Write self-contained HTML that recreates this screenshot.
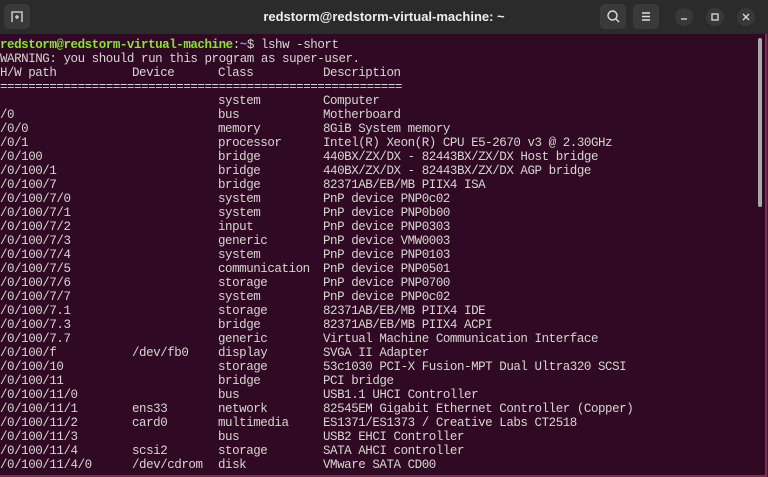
<!DOCTYPE html>
<html><head><meta charset="utf-8"><style>
html,body{margin:0;padding:0;width:768px;height:477px;overflow:hidden;background:#2c2c2c;}
.hdr{position:absolute;left:0;top:0;width:766px;height:34px;background:#2b2b2b;}
.title{position:absolute;left:0;width:768px;top:9px;text-align:center;color:#eee;font:bold 13px "Liberation Sans",sans-serif;}
.btn{position:absolute;top:4px;width:26px;height:25px;background:#3a3a3a;border-radius:5px;}
.cb{position:absolute;top:8px;width:18px;height:18px;background:#383838;border-radius:50%;}
.term{position:absolute;left:0;top:34px;width:765px;height:441px;background:#300a24;border-right:2px solid #7a3050;border-bottom:2px solid #7a3050;}
.sb{position:absolute;left:758px;top:38px;width:4px;height:169px;background:#a8a8a8;border-radius:2px;}
.l{position:absolute;left:0;height:14px;font:12.5px/14px "Liberation Mono",monospace;letter-spacing:-0.45px;color:#d6d6d0;white-space:pre;}
.c{position:absolute;white-space:pre;}
</style></head><body>
<div class="hdr"></div>
<div class="btn" style="left:4px"><svg width="26" height="25"><path d="M8 18V8h10v10M11 13h4M13 11v4" stroke="#ddd" stroke-width="1.3" fill="none"/></svg></div>
<div class="title">redstorm@redstorm-virtual-machine: ~</div>
<div class="btn" style="left:600px"><svg width="26" height="25"><circle cx="12.5" cy="11.5" r="4.5" stroke="#ddd" stroke-width="1.4" fill="none"/><path d="M16 15l3 3" stroke="#ddd" stroke-width="1.4"/></svg></div>
<div class="btn" style="left:633px"><svg width="26" height="25"><path d="M9 9h8M9 12.5h8M9 16h8" stroke="#ddd" stroke-width="1.4"/></svg></div>
<div class="cb" style="left:675px"><svg width="18" height="18"><path d="M6 11h6" stroke="#ddd" stroke-width="1.3"/></svg></div>
<div class="cb" style="left:706px"><svg width="18" height="18"><rect x="6" y="6" width="6" height="6" stroke="#ddd" stroke-width="1.3" fill="none"/></svg></div>
<div class="cb" style="left:737px"><svg width="18" height="18"><path d="M6 6l6 6M12 6l-6 6" stroke="#ddd" stroke-width="1.3"/></svg></div>
<div class="term"></div>
<div class="sb"></div>
<div class="l" style="top:38px"><b style="color:#8ae234">redstorm@redstorm-virtual-machine</b>:<b style="color:#729fcf">~</b>$ lshw -short</div>
<div class="l" style="top:52px">WARNING: you should run this program as super-user.</div>
<div class="l" style="top:66px"><span class="c" style="left:0">H/W path</span><span class="c" style="left:132px">Device</span><span class="c" style="left:218px">Class</span><span class="c" style="left:323px">Description</span></div>
<div class="l" style="top:80px">=========================================================</div>
<div class="l" style="top:94px;width:768px"><span class="c" style="left:218px">system</span><span class="c" style="left:323px">Computer</span></div>
<div class="l" style="top:108px;width:768px"><span class="c" style="left:0">/0</span><span class="c" style="left:218px">bus</span><span class="c" style="left:323px">Motherboard</span></div>
<div class="l" style="top:122px;width:768px"><span class="c" style="left:0">/0/0</span><span class="c" style="left:218px">memory</span><span class="c" style="left:323px">8GiB System memory</span></div>
<div class="l" style="top:136px;width:768px"><span class="c" style="left:0">/0/1</span><span class="c" style="left:218px">processor</span><span class="c" style="left:323px">Intel(R) Xeon(R) CPU E5-2670 v3 @ 2.30GHz</span></div>
<div class="l" style="top:150px;width:768px"><span class="c" style="left:0">/0/100</span><span class="c" style="left:218px">bridge</span><span class="c" style="left:323px">440BX/ZX/DX - 82443BX/ZX/DX Host bridge</span></div>
<div class="l" style="top:164px;width:768px"><span class="c" style="left:0">/0/100/1</span><span class="c" style="left:218px">bridge</span><span class="c" style="left:323px">440BX/ZX/DX - 82443BX/ZX/DX AGP bridge</span></div>
<div class="l" style="top:178px;width:768px"><span class="c" style="left:0">/0/100/7</span><span class="c" style="left:218px">bridge</span><span class="c" style="left:323px">82371AB/EB/MB PIIX4 ISA</span></div>
<div class="l" style="top:192px;width:768px"><span class="c" style="left:0">/0/100/7/0</span><span class="c" style="left:218px">system</span><span class="c" style="left:323px">PnP device PNP0c02</span></div>
<div class="l" style="top:206px;width:768px"><span class="c" style="left:0">/0/100/7/1</span><span class="c" style="left:218px">system</span><span class="c" style="left:323px">PnP device PNP0b00</span></div>
<div class="l" style="top:220px;width:768px"><span class="c" style="left:0">/0/100/7/2</span><span class="c" style="left:218px">input</span><span class="c" style="left:323px">PnP device PNP0303</span></div>
<div class="l" style="top:234px;width:768px"><span class="c" style="left:0">/0/100/7/3</span><span class="c" style="left:218px">generic</span><span class="c" style="left:323px">PnP device VMW0003</span></div>
<div class="l" style="top:248px;width:768px"><span class="c" style="left:0">/0/100/7/4</span><span class="c" style="left:218px">system</span><span class="c" style="left:323px">PnP device PNP0103</span></div>
<div class="l" style="top:262px;width:768px"><span class="c" style="left:0">/0/100/7/5</span><span class="c" style="left:218px">communication</span><span class="c" style="left:323px">PnP device PNP0501</span></div>
<div class="l" style="top:276px;width:768px"><span class="c" style="left:0">/0/100/7/6</span><span class="c" style="left:218px">storage</span><span class="c" style="left:323px">PnP device PNP0700</span></div>
<div class="l" style="top:290px;width:768px"><span class="c" style="left:0">/0/100/7/7</span><span class="c" style="left:218px">system</span><span class="c" style="left:323px">PnP device PNP0c02</span></div>
<div class="l" style="top:304px;width:768px"><span class="c" style="left:0">/0/100/7.1</span><span class="c" style="left:218px">storage</span><span class="c" style="left:323px">82371AB/EB/MB PIIX4 IDE</span></div>
<div class="l" style="top:318px;width:768px"><span class="c" style="left:0">/0/100/7.3</span><span class="c" style="left:218px">bridge</span><span class="c" style="left:323px">82371AB/EB/MB PIIX4 ACPI</span></div>
<div class="l" style="top:332px;width:768px"><span class="c" style="left:0">/0/100/7.7</span><span class="c" style="left:218px">generic</span><span class="c" style="left:323px">Virtual Machine Communication Interface</span></div>
<div class="l" style="top:346px;width:768px"><span class="c" style="left:0">/0/100/f</span><span class="c" style="left:132px">/dev/fb0</span><span class="c" style="left:218px">display</span><span class="c" style="left:323px">SVGA II Adapter</span></div>
<div class="l" style="top:360px;width:768px"><span class="c" style="left:0">/0/100/10</span><span class="c" style="left:218px">storage</span><span class="c" style="left:323px">53c1030 PCI-X Fusion-MPT Dual Ultra320 SCSI</span></div>
<div class="l" style="top:374px;width:768px"><span class="c" style="left:0">/0/100/11</span><span class="c" style="left:218px">bridge</span><span class="c" style="left:323px">PCI bridge</span></div>
<div class="l" style="top:388px;width:768px"><span class="c" style="left:0">/0/100/11/0</span><span class="c" style="left:218px">bus</span><span class="c" style="left:323px">USB1.1 UHCI Controller</span></div>
<div class="l" style="top:402px;width:768px"><span class="c" style="left:0">/0/100/11/1</span><span class="c" style="left:132px">ens33</span><span class="c" style="left:218px">network</span><span class="c" style="left:323px">82545EM Gigabit Ethernet Controller (Copper)</span></div>
<div class="l" style="top:416px;width:768px"><span class="c" style="left:0">/0/100/11/2</span><span class="c" style="left:132px">card0</span><span class="c" style="left:218px">multimedia</span><span class="c" style="left:323px">ES1371/ES1373 / Creative Labs CT2518</span></div>
<div class="l" style="top:430px;width:768px"><span class="c" style="left:0">/0/100/11/3</span><span class="c" style="left:218px">bus</span><span class="c" style="left:323px">USB2 EHCI Controller</span></div>
<div class="l" style="top:444px;width:768px"><span class="c" style="left:0">/0/100/11/4</span><span class="c" style="left:132px">scsi2</span><span class="c" style="left:218px">storage</span><span class="c" style="left:323px">SATA AHCI controller</span></div>
<div class="l" style="top:458px;width:768px"><span class="c" style="left:0">/0/100/11/4/0</span><span class="c" style="left:132px">/dev/cdrom</span><span class="c" style="left:218px">disk</span><span class="c" style="left:323px">VMware SATA CD00</span></div>
</body></html>
